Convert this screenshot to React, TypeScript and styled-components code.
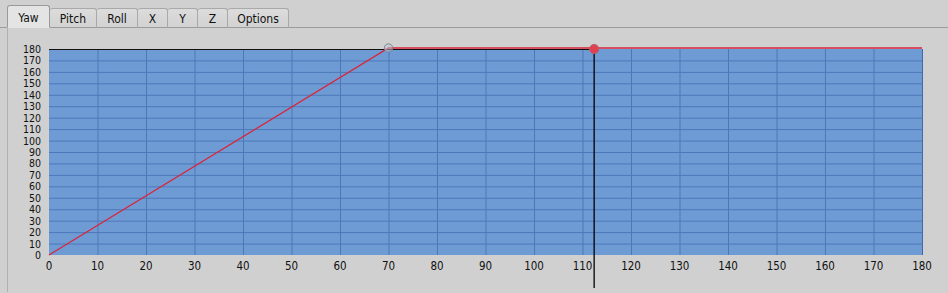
import React, { useState } from 'react';
import styled, { createGlobalStyle } from 'styled-components';

const GlobalStyle = createGlobalStyle`
  html, body {
    margin: 0;
    padding: 0;
    background: #d0d0d0;
    font-family: "DejaVu Sans Condensed", "DejaVu Sans", "Liberation Sans", sans-serif;
  }
`;

const Window = styled.div`
  width: 948px;
  height: 293px;
  overflow: hidden;
  background: #d0d0d0;
`;

const TabBar = styled.div`
  display: flex;
  align-items: flex-end;
  height: 28px;
  padding-left: 7px;
  box-sizing: border-box;
  border-bottom: 1px solid #9c9c9c;
`;

const Tab = styled.div<{ w: number; active?: boolean }>`
  width: ${p => p.w}px;
  height: ${p => (p.active ? 23 : 20)}px;
  margin-bottom: -1px;
  box-sizing: border-box;
  display: flex;
  align-items: center;
  justify-content: center;
  font-size: 12px;
  color: #111;
  background: ${p => (p.active ? '#e4e4e4' : 'linear-gradient(#dcdcdc, #d2d2d2)')};
  border: 1px solid ${p => (p.active ? '#9a9a9a' : '#a9a9a9')};
  border-bottom: ${p => (p.active ? '1px solid #e4e4e4' : '1px solid #9c9c9c')};
  border-left-width: ${p => (p.active ? 1 : 0)}px;
  border-radius: 3px 3px 0 0;
  cursor: default;
  padding-top: ${p => (p.active ? 2 : 1)}px;
`;

const Pane = styled.div`
  margin-left: 7px;
  border-left: 1px solid #b0b0b0;
  height: 264px;
`;

const Chart = styled.svg`
  display: block;
  font-family: "DejaVu Sans Condensed", "DejaVu Sans", "Liberation Sans", sans-serif;
  font-size: 11.5px;
`;

const AxisLabel = styled.text<{ small?: boolean }>`
  fill: #111;
  font-size: ${p => (p.small ? 10.5 : 11.5)}px;
`;

const tabs = [
  { label: 'Yaw', w: 43 },
  { label: 'Pitch', w: 47 },
  { label: 'Roll', w: 41 },
  { label: 'X', w: 30 },
  { label: 'Y', w: 30 },
  { label: 'Z', w: 30 },
  { label: 'Options', w: 61 },
];

const L = 41;
const R = 914;
const T = 21;
const B = 227;
const X = (v: number) => L + (v * (R - L)) / 180;
const Y = (v: number) => B - (v * (B - T)) / 180;

const ticks = Array.from({ length: 19 }, (_, i) => i * 10);
const cursor = 112.4;

const CurveChart: React.FC = () => (
  <Chart width={940} height={264}>
    <rect x={L} y={T} width={R - L} height={B - T} fill="#6f9bd5" />
    {ticks.slice(1, -1).map(t => (
      <line key={'v' + t} x1={X(t) + 0.5} x2={X(t) + 0.5} y1={T} y2={B} stroke="#4c78b9" strokeWidth={1} />
    ))}
    {ticks.slice(1, -1).map(t => (
      <line key={'h' + t} x1={L} x2={R} y1={Y(t) + 0.5} y2={Y(t) + 0.5} stroke="#4c78b9" strokeWidth={1} />
    ))}
    <line x1={R + 0.5} x2={R + 0.5} y1={T} y2={B} stroke="#3f69a8" />
    {ticks.map(t => (
      <AxisLabel small key={'yl' + t} x={33} y={Y(t)} textAnchor="end" dominantBaseline="central">
        {t}
      </AxisLabel>
    ))}
    {ticks.map(t => (
      <AxisLabel key={'xl' + t} x={X(t)} y={238} textAnchor="middle" dominantBaseline="central">
        {t}
      </AxisLabel>
    ))}
    <line x1={L} x2={X(cursor)} y1={T + 0.5} y2={T + 0.5} stroke="#111" strokeWidth={1.2} />
    <polyline
      points={`${X(0)},${Y(0)} ${X(70)},${Y(180) - 1} ${X(180)},${Y(180) - 1}`}
      fill="none"
      stroke="#d9253a"
      strokeWidth={1.3}
    />
    <line x1={X(cursor)} x2={X(cursor)} y1={T} y2={260} stroke="#000" strokeWidth={1.3} />
    <circle cx={X(70)} cy={Y(180) - 1} r={4.2} fill="#b9c3cf" fillOpacity={0.5} stroke="#7d8794" strokeWidth={1} />
    <circle cx={X(cursor)} cy={Y(180)} r={4.6} fill="#e0414f" stroke="#b3606a" strokeWidth={1} />
  </Chart>
);

export default function App() {
  const [active, setActive] = useState('Yaw');
  return (
    <Window>
      <GlobalStyle />
      <TabBar>
        {tabs.map(t => (
          <Tab key={t.label} w={t.w} active={t.label === active} onClick={() => setActive(t.label)}>
            {t.label}
          </Tab>
        ))}
      </TabBar>
      <Pane>
        <CurveChart />
      </Pane>
    </Window>
  );
}
